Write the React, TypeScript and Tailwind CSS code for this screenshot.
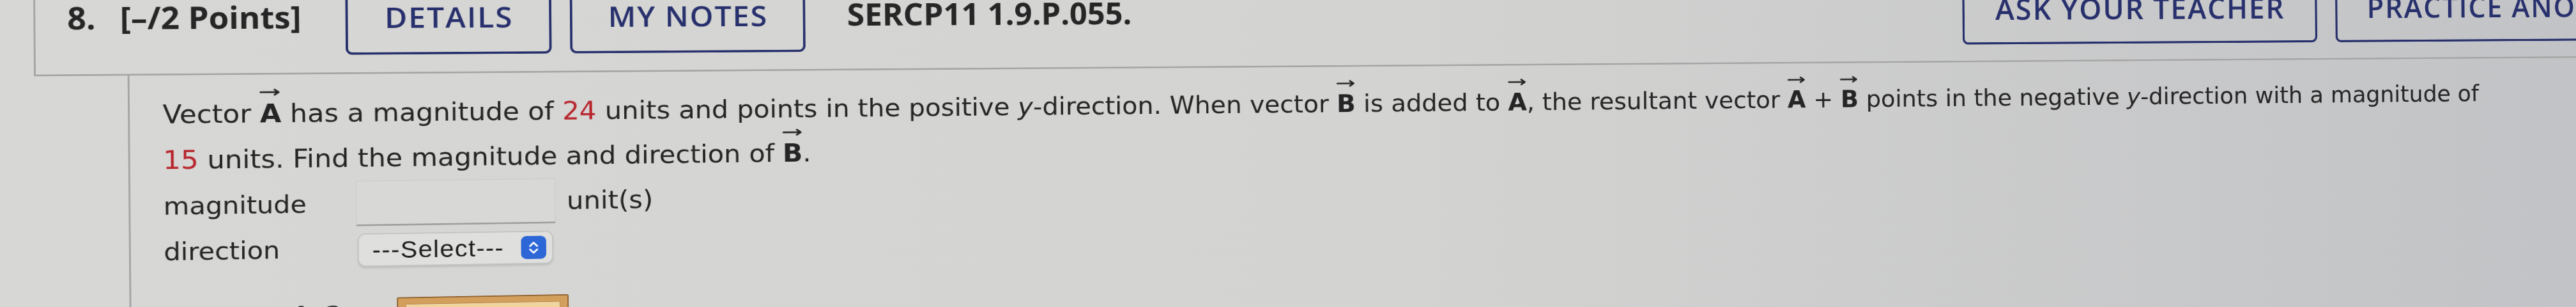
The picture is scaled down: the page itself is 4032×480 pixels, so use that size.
import React from 'react';

interface VecProps {
  /** Letter shown in bold under the arrow */
  children: React.ReactNode;
}

// Bold vector symbol with a small arrow drawn over it
const Vec: React.FC<VecProps> = ({ children }) => (
  <span className="relative inline-block font-bold">
    {children}
    <svg
      className="absolute left-1/2 -top-[5px] h-[14px] w-[36px] -translate-x-1/2"
      viewBox="0 0 36 14"
      fill="none"
    >
      <path
        d="M2 7H31M25 2.5L31.5 7L25 11.5"
        stroke="#252525"
        strokeWidth="3.2"
        strokeLinecap="round"
        strokeLinejoin="round"
      />
    </svg>
  </span>
);

interface HeaderButtonProps {
  label: string;
  className?: string;
}

const HeaderButton: React.FC<HeaderButtonProps> = ({ label, className = '' }) => (
  <div
    className={`shrink-0 rounded-[11px] border-4 border-[#27306c] px-[60px] pt-[48px] pb-[37px] leading-none font-semibold whitespace-nowrap text-[#27306c] ${className}`}
  >
    {label}
  </div>
);

export default function App() {
  return (
    <div className="h-[480px] w-[4032px] overflow-hidden bg-linear-to-r from-[#d7d7d5] via-[#d3d3d1] via-55% to-[#c2c3c6]">
      {/* the reference is a photo of a monitor: slight tilt + perspective */}
      <div className="origin-top-left -rotate-[0.47deg]">
        <div className="perspective-[5750px] perspective-origin-[0_150px]">
          <div className="h-[600px] w-[4700px] origin-top-left rotate-y-[10deg] scale-y-[0.9]">
            {/* Question header */}
            <header className="ml-[53px] flex h-[133px] border-b-[3px] border-l-[3px] border-[#a5a5a5] pl-[51px]">
              <div className="-mt-[50px] flex w-[4779px] shrink-0 items-baseline font-['Open_Sans',sans-serif]">
                <span className="text-[53px] leading-none font-bold text-[#262626]">8.</span>
                <span className="ml-[39px] text-[53px] leading-none font-bold whitespace-nowrap text-[#262626]">
                  [–/2 Points]
                </span>
                <HeaderButton label="DETAILS" className="ml-[73px] text-[51px] tracking-[2px]" />
                <HeaderButton label="MY NOTES" className="ml-[31px] text-[51px] tracking-[2px]" />
                <span className="ml-[72px] text-[55px] leading-none font-bold whitespace-nowrap text-[#262626]">
                  SERCP11 1.9.P.055.
                </span>
                <div className="ml-auto flex items-baseline gap-[37px]">
                  <HeaderButton label="ASK YOUR TEACHER" className="text-[56px] tracking-[2.5px]" />
                  <HeaderButton label="PRACTICE ANOTHER" className="text-[56px] tracking-[2.5px]" />
                </div>
              </div>
            </header>

            {/* Question body */}
            <section className="ml-[203px] h-[470px] border-l-[3px] border-[#a5a5a5] pt-[29px] pl-[53px] font-['DejaVu_Sans',Verdana,sans-serif] text-[#252525]">
              <p className="text-[45px] leading-[80px] whitespace-nowrap">
                Vector <Vec>A</Vec> has a magnitude of <span className="text-[#b8252d]">24</span> units and
                points in the positive <i>y</i>-direction. When vector <Vec>B</Vec> is added to <Vec>A</Vec>, the
                resultant vector <Vec>A</Vec> + <Vec>B</Vec> points in the negative <i>y</i>-direction with a
                magnitude of
                <br />
                <span className="text-[#b8252d]">15</span> units. Find the magnitude and direction of <Vec>B</Vec>.
              </p>

              <div className="flex h-[80px] items-start">
                <span className="w-[314px] shrink-0 text-[43px] leading-[80px]">magnitude</span>
                <div className="h-[80px] w-[331px] shrink-0 border border-b-[3px] border-[#c9c9c7] border-b-[#9f9f9d] bg-[#d8d8d6]" />
                <span className="ml-[19px] text-[45px] leading-[80px]">unit(s)</span>
              </div>

              <div className="flex h-[80px] items-start">
                <span className="w-[316px] shrink-0 text-[43px] leading-[80px]">direction</span>
                <div className="mt-[13px] flex h-[59px] w-[325px] shrink-0 items-center justify-between rounded-[13px] border-2 border-[#c3c3c1] bg-[#dfdfdd] pr-[10px] pl-[22px] font-['Liberation_Sans',Arial,sans-serif] text-[42px] tracking-[1.5px] text-[#1e1e1e] shadow-[0_3px_3px_rgba(0,0,0,0.1)]">
                  <span>---Select---</span>
                  <span className="flex h-[41px] w-[42px] items-center justify-center rounded-[9px] bg-[#2d66d6]">
                    <svg className="h-[28px] w-[20px]" viewBox="0 0 20 28" fill="none">
                      <path
                        d="M4 11L10 5L16 11M4 17L10 23L16 17"
                        stroke="#ffffff"
                        strokeWidth="3"
                        strokeLinecap="round"
                        strokeLinejoin="round"
                      />
                    </svg>
                  </span>
                </div>
              </div>

              <div className="mt-[47px] flex items-start">
                <span className="mt-[8px] text-[45px] leading-none font-bold text-[#3a3a3a]">Need Help?</span>
                <div className="ml-[91px] h-[70px] w-[286px] rounded-[3px] border-2 border-[#8f5f2f] bg-[#d2a05c] px-[12px] pt-[10px]">
                  <div className="h-full border border-[#b5844b] bg-[#efd4a0]" />
                </div>
              </div>
            </section>
          </div>
        </div>
      </div>
    </div>
  );
}
